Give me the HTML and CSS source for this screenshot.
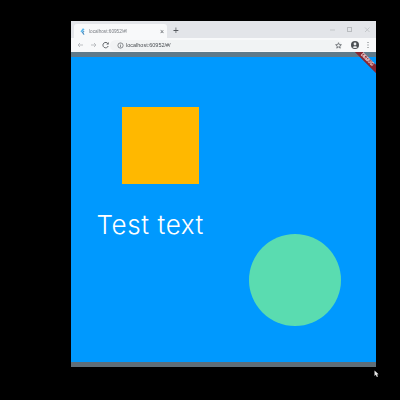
FILE: index.html
```html
<!DOCTYPE html>
<html lang="en">
<head>
<meta charset="utf-8">
<title>Test</title>
<link rel="stylesheet" href="styles.css">
</head>
<body>
<div class="window">
  <div class="tabstrip">
    <div class="tab">
      <svg class="favicon" viewBox="0 0 6 8"><path d="M3.500 0 .5 4 2 5.200 5.500 1.200Z" fill="#5ab8ee"/><path d="M2.500 5 4 3.600 5.500 3.600 3.700 5.400 5.500 7.500 3.800 7.500Z" fill="#1a6fb0"/></svg>
      <span class="tab-title">localhost:60952/#/</span>
      <span class="tab-close">×</span>
    </div>
    <span class="new-tab">+</span>
    <div class="win-controls">
      <svg viewBox="0 0 40 8" class="win-icons"><path d="M0 4H5" stroke="#c4c7ca" fill="none"/><rect x="17.500" y="1.500" width="4" height="4" stroke="#b9bcbf" fill="none"/><path d="M35 1.500 39.500 6M39.500 1.500 35 6" stroke="#c4c7ca" fill="none"/></svg>
    </div>
  </div>
  <div class="toolbar">
    <svg class="nav" viewBox="0 0 33 10"><path d="M6 5H1M3 3 1 5 3 7" stroke="#bcbfc2" fill="none"/><path d="M14 5H19M17 3 19 5 17 7" stroke="#bcbfc2" fill="none"/><path d="M31 3.800A2.700 2.700 0 1 0 31.200 6" stroke="#5f6368" stroke-width="1" fill="none"/><path d="M31.700 2V4.400H29.300Z" fill="#5f6368"/></svg>
    <div class="omnibox">
      <svg class="info" viewBox="0 0 8 8"><circle cx="4" cy="4" r="3" stroke="#5f6368" fill="none" stroke-width=".8"/><path d="M4 3.500V6M4 2V2.800" stroke="#5f6368" stroke-width=".8"/></svg>
      <span class="url">localhost:60952/#/</span>
      <svg class="star" viewBox="0 0 8 8"><path d="M4 .8 4.900 3 7.300 3.100 5.400 4.600 6 7 4 5.700 2 7 2.600 4.600.7 3.100 3.100 3Z" stroke="#5f6368" stroke-width=".9" fill="none"/></svg>
    </div>
    <svg class="avatar" viewBox="0 0 8 8"><circle cx="4" cy="4" r="4" fill="#4a4e52"/><circle cx="4" cy="3" r="1.400" fill="#eceef0"/><path d="M1.500 6.300C2.500 4.800 5.500 4.800 6.500 6.300 5.500 7.300 2.500 7.300 1.500 6.300Z" fill="#eceef0"/></svg>
    <svg class="menu" viewBox="0 0 2 8"><path d="M1 1V2M1 3.500V4.500M1 6V7" stroke="#5f6368" stroke-width=".9"/></svg>
  </div>
  <div class="page">
    <div class="appbar"></div>
    <div class="canvas">
      <div class="square"></div>
      <div class="label">Test text</div>
      <div class="circle"></div>
    </div>
    <div class="footbar"></div>
    <div class="debug"><span>DEBUG</span></div>
  </div>
</div>
<svg class="cursor" viewBox="0 0 5 8"><path d="M.5 .5 .5 6 1.800 4.800 2.800 7 4 6.500 3 4.400 4.600 4.200Z" fill="#e8e8e8"/></svg>
</body>
</html>
```
FILE: styles.css
```css
html, body {
  margin: 0;
  height: 400px;
  overflow: hidden;
  background: #000;
}
body {
  padding: 21px 24px 0 71px;
  box-sizing: border-box;
  position: relative;
  font-family: "Liberation Sans", Arial, sans-serif;
}
.window {
  width: 305px;
  display: flex;
  flex-direction: column;
}
.tabstrip {
  height: 17px;
  background: #e3e5e9;
  display: flex;
  align-items: flex-end;
  filter: blur(.3px);
}
.tab {
  width: 93px;
  height: 14px;
  margin-left: 3px;
  background: #f8f9fa;
  border-radius: 3px 3px 0 0;
  display: flex;
  align-items: center;
  padding: 0 3px 0 6px;
  box-sizing: border-box;
}
.favicon {
  width: 5px;
  height: 7px;
  flex: none;
}
.tab-title {
  font-size: 4.700px;
  color: #787c82;
  margin-left: 4px;
  flex: 1;
  white-space: nowrap;
}
.tab-close {
  font-size: 7px;
  line-height: 7px;
  color: #55595e;
}
.new-tab {
  font-size: 10px;
  line-height: 12px;
  color: #55595e;
  margin-left: 6px;
  margin-bottom: 1px;
}
.win-controls {
  margin-left: auto;
  margin-right: 6px;
  align-self: center;
  display: flex;
}
.win-icons {
  width: 40px;
  height: 8px;
}
.toolbar {
  height: 14px;
  background: #f8f9fa;
  display: flex;
  align-items: center;
  padding: 0 7px 0 6px;
  box-sizing: border-box;
  filter: blur(.3px);
}
.nav {
  width: 33px;
  height: 10px;
  flex: none;
}
.omnibox {
  flex: 1;
  height: 11px;
  margin-right: 9px;
  padding: 0 0 0 7px;
  background: #f1f3f4;
  border-radius: 6px;
  display: flex;
  align-items: center;
}
.info {
  width: 7px;
  height: 7px;
  flex: none;
}
.url {
  font-size: 5.500px;
  color: #4a4e52;
  margin-left: 2px;
  flex: 1;
  white-space: nowrap;
}
.star {
  width: 7px;
  height: 7px;
}
.avatar {
  width: 8px;
  height: 8px;
  flex: none;
}
.menu {
  width: 2px;
  height: 8px;
  margin-left: 8px;
  flex: none;
}
.page {
  position: relative;
  overflow: hidden;
  display: flex;
  flex-direction: column;
}
.appbar {
  height: 5px;
  background: #5f7a8a;
}
.canvas {
  height: 305px;
  background: #0099fe;
  padding-top: 50px;
  box-sizing: border-box;
  display: flex;
  flex-direction: column;
}
.square {
  width: 77px;
  height: 77px;
  margin-left: 51px;
  background: #ffb800;
  flex: none;
}
.label {
  margin: 28px 0 0 25.500px;
  height: 26px;
  font-family: "Inter", sans-serif;
  font-weight: 300;
  font-size: 26px;
  letter-spacing: .6px;
  line-height: 26px;
  color: #fff;
  white-space: nowrap;
}
.circle {
  width: 92px;
  height: 92px;
  margin: -4px 0 0 178px;
  border-radius: 50%;
  background: #5adcb0;
  flex: none;
}
.footbar {
  height: 5px;
  background: #5f6e78;
}
.debug {
  position: absolute;
  top: 5px;
  right: -21px;
  width: 60px;
  height: 6px;
  background: #8a2630;
  transform: rotate(45deg);
  display: flex;
  justify-content: center;
  align-items: center;
  filter: blur(.3px);
}
.debug span {
  font-size: 4.500px;
  font-weight: 700;
  line-height: 6px;
  color: #fff;
}
.cursor {
  position: absolute;
  left: 374px;
  top: 370px;
  width: 5px;
  height: 8px;
}
```
